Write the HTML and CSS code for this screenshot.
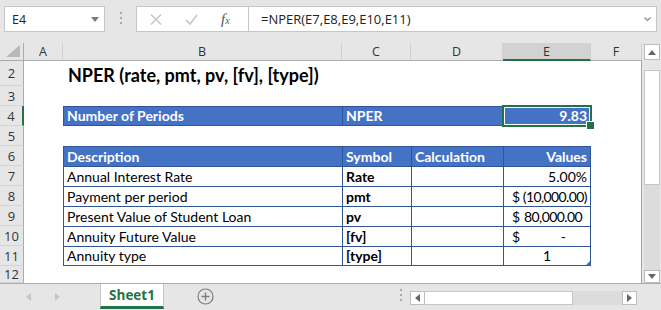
FILE: index.html
```html
<!DOCTYPE html>
<html lang="en">
<head>
  <meta charset="UTF-8" />
  <title>NPER — Number of Periods</title>
  <link rel="stylesheet" href="styles.css">
</head>
<body>

  <!-- formula bar -->
  <div class="formula-bar">
    <div class="name-box">
      <span>E4</span>
      <svg width="8" height="5" viewBox="0 0 8 5"><path d="M0 0h8L4 5z" fill="#7a7a7a"/></svg>
    </div>
    <div class="grip"><i></i><i></i><i></i></div>
    <div class="fx-buttons">
      <svg width="12" height="11" viewBox="0 0 12 11"><path d="M1 .5l10 10M11 .5l-10 10" stroke="#c4c4c4" stroke-width="1.4" fill="none"/></svg>
      <svg width="13" height="11" viewBox="0 0 13 11"><path d="M1 6l4 4 7-9" stroke="#c4c4c4" stroke-width="1.6" fill="none"/></svg>
      <span class="fx">f<small>x</small></span>
    </div>
    <div class="formula-input">
      <span>=NPER(E7,E8,E9,E10,E11)</span>
      <svg width="7" height="5" viewBox="0 0 7 5"><path d="M.5 .5l3 3 3-3" stroke="#8a8a8a" stroke-width="1.2" fill="none"/></svg>
    </div>
  </div>

  <div class="workspace">
    <!-- grid: row header + columns A..F -->
    <div class="sheet">
      <div class="corner"><svg width="14" height="12" viewBox="0 0 14 12"><path d="M14 0v12H0z" fill="#b9b9b9"/></svg></div>
      <div class="ch">A</div>
      <div class="ch">B</div>
      <div class="ch">C</div>
      <div class="ch">D</div>
      <div class="ch sel">E</div>
      <div class="ch">F</div>

      <div class="rh">2</div>
      <div class="c"></div>
      <div class="c title">NPER (rate, pmt, pv, [fv], [type])</div>
      <div class="c"></div><div class="c"></div><div class="c"></div>
      <div class="c f"></div>

      <div class="rh">3</div>
      <div class="c"></div><div class="c"></div><div class="c"></div><div class="c"></div><div class="c"></div>
      <div class="c f"></div>

      <div class="rh sel">4</div>
      <div class="c"></div>
      <div class="c t hd btm">Number of Periods</div>
      <div class="c t hd btm span2">NPER</div>
      <div class="c t hd btm e r active">9.83</div>
      <div class="c f"></div>

      <div class="rh">5</div>
      <div class="c"></div><div class="c"></div><div class="c"></div><div class="c"></div><div class="c"></div>
      <div class="c f"></div>

      <div class="rh">6</div>
      <div class="c"></div>
      <div class="c t hd">Description</div>
      <div class="c t hd">Symbol</div>
      <div class="c t hd">Calculation</div>
      <div class="c t hd e r">Values</div>
      <div class="c f"></div>

      <div class="rh">7</div>
      <div class="c"></div>
      <div class="c t">Annual Interest Rate</div>
      <div class="c t b">Rate</div>
      <div class="c t"></div>
      <div class="c t e r">5.00%</div>
      <div class="c f"></div>

      <div class="rh">8</div>
      <div class="c"></div>
      <div class="c t">Payment per period</div>
      <div class="c t b">pmt</div>
      <div class="c t"></div>
      <div class="c t e acct"><span>$</span><span class="n">(10,000.00)</span></div>
      <div class="c f"></div>

      <div class="rh">9</div>
      <div class="c"></div>
      <div class="c t">Present Value of Student Loan</div>
      <div class="c t b">pv</div>
      <div class="c t"></div>
      <div class="c t e acct"><span>$</span><span class="n pad">80,000.00</span></div>
      <div class="c f"></div>

      <div class="rh">10</div>
      <div class="c"></div>
      <div class="c t">Annuity Future Value</div>
      <div class="c t b">[fv]</div>
      <div class="c t"></div>
      <div class="c t e acct"><span>$</span><span class="dash">-</span></div>
      <div class="c f"></div>

      <div class="rh">11</div>
      <div class="c"></div>
      <div class="c t btm">Annuity type</div>
      <div class="c t btm b">[type]</div>
      <div class="c t btm"></div>
      <div class="c t btm e mid resize">1</div>
      <div class="c f"></div>

      <div class="rh">12</div>
      <div class="c"></div><div class="c"></div><div class="c"></div><div class="c"></div><div class="c"></div>
      <div class="c f"></div>
    </div>

    <!-- vertical scrollbar -->
    <div class="vscroll">
      <div class="sbtn"><svg width="8" height="5" viewBox="0 0 8 5"><path d="M0 5h8L4 0z" fill="#666"/></svg></div>
      <div class="vthumb"></div>
      <div class="vtrack"></div>
      <div class="sbtn down"><svg width="8" height="5" viewBox="0 0 8 5"><path d="M0 0h8L4 5z" fill="#666"/></svg></div>
    </div>
  </div>

  <!-- sheet tabs -->
  <div class="tabbar">
    <div class="tab-nav">
      <svg width="5" height="8" viewBox="0 0 5 8"><path d="M5 0v8L0 4z" fill="#c6c6c6"/></svg>
      <svg width="5" height="8" viewBox="0 0 5 8"><path d="M0 0v8l5-4z" fill="#c6c6c6"/></svg>
    </div>
    <div class="tab">Sheet1</div>
    <svg class="add" width="17" height="17" viewBox="0 0 17 17">
      <circle cx="8.5" cy="8.5" r="7.5" fill="none" stroke="#7d7d7d" stroke-width="1.2"/>
      <path d="M8.5 4.5v8M4.5 8.5h8" stroke="#7d7d7d" stroke-width="1.4"/>
    </svg>
    <div class="grip h"><i></i><i></i><i></i></div>
    <div class="hscroll">
      <div class="sbtn"><svg width="5" height="8" viewBox="0 0 5 8"><path d="M5 0v8L0 4z" fill="#666"/></svg></div>
      <div class="hthumb"></div>
      <div class="htrack"></div>
      <div class="sbtn"><svg width="5" height="8" viewBox="0 0 5 8"><path d="M0 0v8l5-4z" fill="#666"/></svg></div>
    </div>
  </div>

</body>
</html>
```

FILE: styles.css
```css
:root {
  --chrome: #e6e6e6;
  --line: #c6c6c6;
  --green: #217346;
  --blue: #4472c4;
  --blue-line: #2f5597;
  --text: #000;
}
* { box-sizing: border-box; margin:0; padding:0; }
body {
  width: 661px;
  height: 310px;
  overflow: hidden;
  background: var(--chrome);
  font-family: "Open Sans", sans-serif;
  color: #222;
}

/* formula bar */
.formula-bar {
  height: 43px;
  display: flex;
  align-items: flex-start;
  padding: 6px 4px 0;
}
.name-box {
  width: 101px;
  height: 26px;
  background: #fff;
  border: 1px solid var(--line);
  display: flex;
  align-items: center;
  justify-content: space-between;
  padding: 0 5px 0 7px;
  font-size: 12.5px;
}
.grip {
  width: 31px;
  display: flex;
  flex-direction: column;
  align-items: center;
  gap: 3px;
  padding-top: 6px;
}
.grip i {
  width: 2px;
  height: 2px;
  background: #aaa;
}
.fx-buttons {
  width: 113px;
  height: 26px;
  background: #fff;
  border: 1px solid var(--line);
  display: flex;
  align-items: center;
  gap: 23px;
  padding-left: 13px;
}
.fx {
  font-family: "Liberation Serif", serif;
  font-style: italic;
  font-size: 15px;
  color: #555;
  line-height: 1;
}
.fx small { font-size: 10px; }
.formula-input {
  flex: 1;
  height: 26px;
  background: #fff;
  border: 1px solid var(--line);
  border-left: none;
  display: flex;
  align-items: center;
  justify-content: space-between;
  padding: 0 5px 0 12px;
  font-size: 13px;
}

/* sheet grid */
.workspace {
  display: flex;
  height: 240px;
}
.sheet {
  width: 642px;
  display: grid;
  grid-template-columns: 24px 39px 279px 69px 92px 88px 51px;
  grid-template-rows: 18px 25px repeat(9, 20px) 17px;
  background: #fff;
  font-family: Lato, sans-serif;
  font-size: 14px;
  color: var(--text);
}
.corner {
  background: var(--chrome);
  border-right: 1px solid #ababab;
  border-bottom: 1px solid #ababab;
  display: flex;
  align-items: flex-end;
  justify-content: flex-end;
  padding: 0 3px 3px 0;
}
.ch {
  background: var(--chrome);
  border-right: 1px solid #d0d0d0;
  border-bottom: 1px solid #ababab;
  display: flex;
  align-items: center;
  justify-content: center;
  font-family: "Open Sans", sans-serif;
  font-size: 12.5px;
  color: #333;
}
.ch:last-child { border-right: none; }
.ch.sel {
  background: #d2d2d2;
  border-bottom: 2px solid var(--green);
}
.rh {
  background: var(--chrome);
  border-right: 1px solid #ababab;
  border-bottom: 1px solid #d4d4d4;
  display: flex;
  align-items: center;
  justify-content: center;
  font-family: "Open Sans", sans-serif;
  font-size: 13px;
  color: #333;
}
.rh.sel {
  border-right: 2px solid var(--green);
  color: #3d3d3d;
}
.c {
  display: flex;
  align-items: flex-end;
  padding: 0 3px 1px;
  white-space: nowrap;
}
.c.f { border-right: 1px solid #a5a5a5; }
.title {
  font-weight: bold;
  font-size: 18px;
  padding-left: 5px;
  padding-bottom: 0;
}

/* blue table */
.t {
  border-left: 1px solid var(--blue-line);
  border-top: 1px solid var(--blue-line);
  padding-left: 3px;
}
.t.e { border-right: 1px solid var(--blue-line); }
.t.btm { border-bottom: 1px solid var(--blue-line); }
.t.hd {
  background: var(--blue);
  color: #fff;
  font-weight: bold;
}
.span2 { grid-column: span 2; }
.b { font-weight: bold; }
.r { justify-content: flex-end; }
.mid { justify-content: center; }
.acct {
  justify-content: space-between;
  padding-left: 8px;
}
.acct .n { letter-spacing: -0.6px; }
.acct .pad { padding-right: 5px; }
.acct .dash { padding-right: 21px; }
.active { position: relative; }
.active::before {
  content: "";
  position: absolute;
  left: -2px;
  top: -2px;
  right: -2px;
  bottom: -2px;
  border: 2px solid var(--green);
  box-shadow: inset 0 0 0 1px #fff;
}
.active::after {
  content: "";
  position: absolute;
  right: -5px;
  bottom: -5px;
  width: 7px;
  height: 7px;
  background: var(--green);
  border: 1px solid #fff;
}
.resize { position: relative; }
.resize::after {
  content: "";
  position: absolute;
  right: 0;
  bottom: 0;
  border-left: 4px solid transparent;
  border-bottom: 4px solid var(--blue);
}

/* scrollbars */
.vscroll {
  width: 19px;
  display: flex;
  flex-direction: column;
  padding: 1px 1px 0 2px;
}
.sbtn {
  background: #fff;
  border: 1px solid #bdbdbd;
  display: flex;
  align-items: center;
  justify-content: center;
}
.vscroll .sbtn { height: 16px; }
.vscroll .sbtn.down { height: 13px; }
.vthumb {
  height: 115px;
  margin-top: 10px;
  background: #fff;
  border: 1px solid #c6c6c6;
}
.vtrack {
  flex: 1;
  background: #dcdcdc;
}

/* tab bar */
.tabbar {
  height: 27px;
  border-top: 1px solid #ababab;
  display: flex;
  align-items: flex-start;
}
.tab-nav {
  width: 100px;
  height: 100%;
  display: flex;
  align-items: center;
  gap: 24px;
  padding-left: 26px;
}
.tab {
  width: 64px;
  height: 25px;
  background: #fff;
  border-left: 1px solid var(--line);
  border-right: 1px solid var(--line);
  border-bottom: 3px solid var(--green);
  color: var(--green);
  font-weight: bold;
  font-size: 13.5px;
  display: flex;
  align-items: center;
  justify-content: center;
}
.add {
  margin: 4px 0 0 33px;
}
.grip.h {
  width: 18px;
  margin-left: 178px;
  padding-top: 5px;
}
.hscroll {
  width: 227px;
  height: 14px;
  margin-top: 7px;
  display: flex;
}
.hscroll .sbtn { width: 15px; }
.hthumb {
  width: 148px;
  background: #fff;
  border: 1px solid #c6c6c6;
  border-left: none;
}
.htrack {
  flex: 1;
  background: #dcdcdc;
}
```
